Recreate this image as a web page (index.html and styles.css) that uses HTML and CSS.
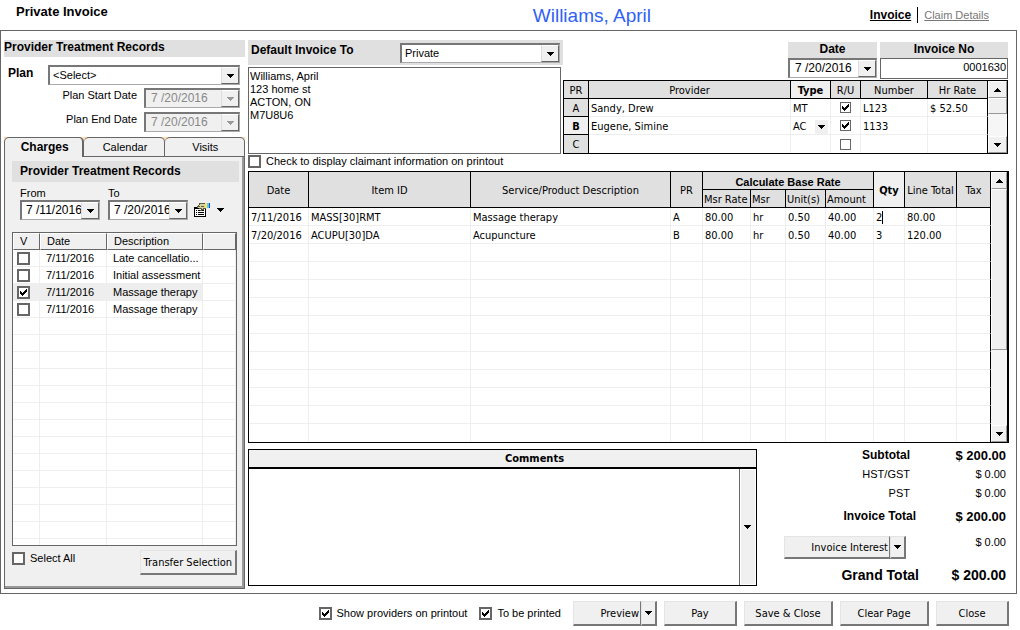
FILE: index.html
```html
<!DOCTYPE html>
<html lang="en">

<head>
  <meta charset="UTF-8">
  <meta name="viewport" content="width=device-width, initial-scale=1.0">
  <title>Private Invoice</title>
  <link rel="stylesheet" href="styles.css">
</head>

<body>
  <header class="page-header">
    <h1 class="page-title">Private Invoice</h1>
    <div class="client-name">Williams, April</div>
    <nav class="page-nav">
      <a href="#invoice" class="active">Invoice</a>
      <a href="#claim">Claim Details</a>
    </nav>
  </header>

  <main class="frame">
    <!-- left side: treatment records -->
    <aside class="sidebar">
      <h2 class="bar">Provider Treatment Records</h2>
      <div class="plan">
        <label class="plan-label" for="plan">Plan</label>
        <div class="combo"><select id="plan"><option>&lt;Select&gt;</option></select></div>
      </div>
      <div class="plan-date">
        <label for="planStart">Plan Start Date</label>
        <div class="combo date disabled"><select id="planStart" disabled><option>7 /20/2016</option></select></div>
      </div>
      <div class="plan-date">
        <label for="planEnd">Plan End Date</label>
        <div class="combo date disabled"><select id="planEnd" disabled><option>7 /20/2016</option></select></div>
      </div>

      <div class="tabs">
        <button class="tab active">Charges</button>
        <button class="tab">Calendar</button>
        <button class="tab">Visits</button>
      </div>

      <section class="tab-panel">
        <h3 class="bar inner-bar">Provider Treatment Records</h3>
        <div class="range">
          <div class="range-field">
            <label for="from">From</label>
            <div class="combo date"><select id="from"><option>7 /11/2016</option></select></div>
          </div>
          <div class="range-field">
            <label for="to">To</label>
            <div class="combo date"><select id="to"><option>7 /20/2016</option></select></div>
          </div>
          <button class="icon-btn" aria-label="Options">
            <svg width="16" height="15" viewBox="0 0 16 15" shape-rendering="crispEdges">
              <path d="M0 4h12v10H0z" fill="#000" />
              <path d="M1 6h10v7H1z" fill="#fff" />
              <path d="M2 7h1v1H2zM4 7h6v1H4zM2 9h1v1H2zM4 9h6v1H4zM2 11h1v1H2zM4 11h6v1H4z" fill="#000" />
              <path d="M5 0h6v1h1v5h-2v1H8v1H6V7h1V6H5V5H3V3h1V2h1z" fill="#5c5a44" />
              <path d="M6 1h5v4H9v1H8V5H4V4h2V3H5V2h1z" fill="#d8d4a0" />
              <path d="M7 3h3v1H7z" fill="#5c5a44" />
              <path d="M11 0h2v5h-2z" fill="#ffe45a" />
              <path d="M13 0h2v5h-2z" fill="#58c8ff" />
              <path d="M15 0h1v5h-1z" fill="#0a50d8" />
            </svg>
            <i class="caret"></i>
          </button>
        </div>

        <div class="list">
          <table>
            <colgroup><col class="l-check"><col class="l-date"><col class="l-desc"><col></colgroup>
            <thead>
              <tr><th>V</th><th>Date</th><th>Description</th><th></th></tr>
            </thead>
            <tbody id="charges">
              <tr><td><input type="checkbox" aria-label="Late cancellation"></td><td>7/11/2016</td><td>Late cancellatio...</td><td></td></tr>
              <tr><td><input type="checkbox" aria-label="Initial assessment"></td><td>7/11/2016</td><td>Initial assessment</td><td></td></tr>
              <tr class="selected"><td><input type="checkbox" aria-label="Massage therapy" checked></td><td>7/11/2016</td><td>Massage therapy</td><td></td></tr>
              <tr><td><input type="checkbox" aria-label="Massage therapy"></td><td>7/11/2016</td><td>Massage therapy</td><td></td></tr>
            </tbody>
          </table>
        </div>

        <div class="list-actions">
          <label class="check"><input type="checkbox"> Select All</label>
          <button class="btn">Transfer Selection</button>
        </div>
      </section>
    </aside>

    <!-- right side: the invoice -->
    <div class="invoice">
      <div class="top">
        <section class="invoice-to">
          <div class="bar to-bar">
            <label for="invoiceTo">Default Invoice To</label>
            <div class="combo"><select id="invoiceTo"><option>Private</option></select></div>
          </div>
          <textarea class="address" aria-label="Address">Williams, April
123 home st
ACTON, ON
M7U8U6</textarea>
          <label class="check"><input type="checkbox"> Check to display claimant information on printout</label>
        </section>

        <section class="providers">
          <div class="numbers">
            <div class="number-field date-field">
              <label class="bar" for="date">Date</label>
              <div class="combo date"><select id="date"><option>7 /20/2016</option></select></div>
            </div>
            <div class="number-field no-field">
              <label class="bar" for="invoiceNo">Invoice No</label>
              <input type="text" id="invoiceNo" value="0001630">
            </div>
          </div>
          <div class="grid">
            <table>
              <colgroup><col class="p-pr"><col><col class="p-type"><col class="p-ru"><col class="p-number"><col class="p-rate"></colgroup>
              <thead>
                <tr><th>PR</th><th>Provider</th><th class="current">Type</th><th>R/U</th><th>Number</th><th>Hr Rate</th></tr>
              </thead>
              <tbody>
                <tr><th>A</th><td>Sandy, Drew</td><td>MT</td><td class="center"><input type="checkbox" aria-label="R/U A" checked></td><td>L123</td><td>$ 52.50</td></tr>
                <tr><th class="current">B</th><td>Eugene, Simine</td><td><div class="type-cell">AC <button aria-label="Choose type"><i class="caret"></i></button></div></td><td class="center"><input type="checkbox" aria-label="R/U B" checked></td><td>1133</td><td></td></tr>
                <tr><th>C</th><td></td><td></td><td class="center"><input type="checkbox" aria-label="R/U C"></td><td></td><td></td></tr>
              </tbody>
            </table>
            <div class="scrollbar">
              <button class="up" aria-label="Scroll up"><i class="caret"></i></button>
              <div class="thumb"></div>
              <button class="down" aria-label="Scroll down"><i class="caret"></i></button>
            </div>
          </div>
        </section>
      </div>

      <div class="grid items">
        <table>
          <colgroup>
            <col class="i-date"><col class="i-id"><col><col class="i-pr"><col class="i-rate"><col class="i-msr">
            <col class="i-units"><col class="i-amount"><col class="i-qty"><col class="i-total"><col class="i-tax">
          </colgroup>
          <thead>
            <tr>
              <th rowspan="2">Date</th><th rowspan="2">Item ID</th><th rowspan="2">Service/Product Description</th><th rowspan="2">PR</th>
              <th colspan="4" class="group">Calculate Base Rate</th>
              <th rowspan="2" class="current">Qty</th><th rowspan="2">Line Total</th><th rowspan="2">Tax</th>
            </tr>
            <tr class="sub"><th>Msr Rate</th><th>Msr</th><th>Unit(s)</th><th>Amount</th></tr>
          </thead>
          <tbody id="items">
            <tr><td>7/11/2016</td><td>MASS[30]RMT</td><td>Massage therapy</td><td>A</td><td>80.00</td><td>hr</td><td>0.50</td><td>40.00</td><td><span class="editing">2</span></td><td>80.00</td><td></td></tr>
            <tr><td>7/20/2016</td><td>ACUPU[30]DA</td><td>Acupuncture</td><td>B</td><td>80.00</td><td>hr</td><td>0.50</td><td>40.00</td><td>3</td><td>120.00</td><td></td></tr>
          </tbody>
        </table>
        <div class="scrollbar">
          <button class="up" aria-label="Scroll up"><i class="caret"></i></button>
          <div class="thumb"></div>
          <button class="down" aria-label="Scroll down"><i class="caret"></i></button>
        </div>
      </div>

      <div class="bottom">
        <section class="comments">
          <label for="comments">Comments</label>
          <div class="comments-body">
            <textarea id="comments"></textarea>
            <button aria-label="Choose comment"><i class="caret"></i></button>
          </div>
        </section>

        <section class="totals">
          <div class="total strong"><span>Subtotal</span><span class="amount">$ 200.00</span></div>
          <div class="total"><span>HST/GST</span><span class="amount">$ 0.00</span></div>
          <div class="total"><span>PST</span><span class="amount">$ 0.00</span></div>
          <div class="total strong sum"><span>Invoice Total</span><span class="amount">$ 200.00</span></div>
          <div class="total interest">
            <div class="split">
              <button class="btn">Invoice Interest</button>
              <button class="btn drop" aria-label="Interest options"><i class="caret"></i></button>
            </div>
            <span class="amount">$ 0.00</span>
          </div>
          <div class="total strong grand"><span>Grand Total</span><span class="amount">$ 200.00</span></div>
        </section>
      </div>
    </div>
  </main>

  <footer class="actions">
    <label class="check"><input type="checkbox" checked> Show providers on printout</label>
    <label class="check"><input type="checkbox" checked> To be printed</label>
    <div class="split">
      <button class="btn">Preview</button>
      <button class="btn drop" aria-label="Preview options"><i class="caret"></i></button>
    </div>
    <button class="btn">Pay</button>
    <button class="btn wide">Save &amp; Close</button>
    <button class="btn wide">Clear Page</button>
    <button class="btn">Close</button>
  </footer>

  <script>
    // fill the tables up with empty rows
    function addEmptyRows(id, rows, cols) {
      const body = document.getElementById(id);
      for (let i = 0; i < rows; i++) {
        const tr = body.insertRow();
        for (let j = 0; j < cols; j++) tr.insertCell();
      }
    }
    addEmptyRows('charges', 16, 4);
    addEmptyRows('items', 11, 11);
  </script>
</body>

</html>
```
FILE: styles.css
```css
:root {
  --sans: "Liberation Sans", Arial, sans-serif;
  --ui: "DejaVu Sans Condensed", Tahoma, sans-serif;
  --gray: #e0e0e0;
  --face: #f0f0f0;
  --dark: #666;
  --caret: url("data:image/svg+xml,%3Csvg xmlns='http://www.w3.org/2000/svg' width='7' height='4' shape-rendering='crispEdges'%3E%3Cpath d='M0 0h7v1H0zM1 1h5v1H1zM2 2h3v1H2zM3 3h1v1H3z'/%3E%3C/svg%3E");
  --caret-off: url("data:image/svg+xml,%3Csvg xmlns='http://www.w3.org/2000/svg' width='7' height='4' shape-rendering='crispEdges'%3E%3Cpath fill='%23999' d='M0 0h7v1H0zM1 1h5v1H1zM2 2h3v1H2zM3 3h1v1H3z'/%3E%3C/svg%3E");
  --tick: url("data:image/svg+xml,%3Csvg xmlns='http://www.w3.org/2000/svg' width='7' height='7' shape-rendering='crispEdges'%3E%3Cpath d='M0 2h1v3H0zM1 3h1v3H1zM2 4h1v3H2zM3 3h1v3H3zM4 2h1v3H4zM5 1h1v3H5zM6 0h1v3H6z'/%3E%3C/svg%3E");
}

* {
  box-sizing: border-box;
}

body {
  margin: 0;
  background: #fff;
  color: #000;
  font: 11px/13px var(--sans);
}

h1,
h2,
h3 {
  margin: 0;
}

button,
input,
select,
textarea {
  margin: 0;
  padding: 0;
  border: 0;
  border-radius: 0;
  background: none;
  color: inherit;
  font: inherit;
}

/* header */
.page-header {
  display: flex;
  height: 30px;
  padding: 0 31px 0 16px;
}

.page-title {
  flex: 1;
  font-size: 13px;
  line-height: 24px;
}

.client-name {
  color: #2f62f5;
  font-size: 19px;
  line-height: 31px;
}

.page-nav {
  flex: 0 0 338px;
  display: flex;
  justify-content: flex-end;
  align-items: center;
}

.page-nav a {
  color: #777;
  line-height: 16px;
}

.page-nav .active {
  margin-right: 6px;
  padding-right: 6px;
  border-right: 1px solid #000;
  color: #000;
  font-size: 12px;
  font-weight: bold;
}

.frame {
  display: grid;
  grid-template-columns: 241px 1fr;
  gap: 3px;
  margin-right: 3px;
  padding: 9px 7px 4px 3px;
  border: 1px solid var(--dark);
}

.bar {
  background: var(--gray);
  font-size: 12px;
  font-weight: bold;
  line-height: 15px;
}

/* form controls */
.combo {
  display: grid;
  height: 20px;
  border: 1px solid;
  border-width: 2px 1px 1px 2px;
  border-color: #777 #aaa #aaa #777;
  background: #fff;
}

.combo select {
  grid-area: 1 / 1;
  min-width: 0;
  padding: 0 16px 0 3px;
  appearance: none;
}

.combo::after {
  content: "";
  grid-area: 1 / 1;
  justify-self: end;
  width: 16px;
  border: 1px solid;
  border-color: #fff var(--dark) var(--dark) #ddd;
  background: var(--face) var(--caret) center no-repeat;
  pointer-events: none;
}

.combo.date select {
  padding-left: 5px;
  font-size: 12px;
}

.combo.disabled {
  background: var(--face);
}

.combo.disabled select {
  color: #888;
  opacity: 1;
}

.combo.disabled::after {
  background-image: var(--caret-off);
}

.caret {
  display: block;
  width: 7px;
  height: 4px;
  background: var(--caret);
}

.up .caret {
  transform: rotate(180deg);
}

input[type="checkbox"] {
  display: block;
  flex: none;
  width: 13px;
  height: 13px;
  border: 2px solid var(--dark);
  background: #fff;
  appearance: none;
}

input[type="checkbox"]:checked {
  background: #fff var(--tick) center no-repeat;
}

.check {
  display: flex;
  align-items: center;
  gap: 5px;
}

.btn {
  min-width: 73px;
  height: 25px;
  border: 1px solid;
  border-width: 1px 2px 2px 1px;
  border-color: #e4e4e4 #777 #777 #e4e4e4;
  background: var(--face);
  font-family: var(--ui);
  text-align: center;
}

.btn.wide {
  min-width: 89px;
}

.split {
  display: flex;
}

.split .btn {
  min-width: 0;
  padding-right: 1px;
  border-right-width: 1px;
  text-align: right;
}

.split .drop {
  display: flex;
  align-items: center;
  justify-content: center;
  width: 16px;
  padding: 0;
  border-right-width: 2px;
}

/* sidebar */
.sidebar {
  display: flex;
  flex-direction: column;
}

.sidebar > .bar {
  height: 17px;
}

.plan {
  display: flex;
  margin: 8px 5px 3px 4px;
}

.plan-label {
  width: 40px;
  font-size: 12px;
  font-weight: bold;
  line-height: 17px;
}

.plan .combo {
  flex: 1;
}

.plan-date {
  display: flex;
  justify-content: flex-end;
  gap: 7px;
  margin: 0 5px 4px 0;
  line-height: 15px;
}

.plan-date .combo {
  width: 96px;
}

.tabs {
  display: grid;
  grid-template-columns: repeat(3, 1fr);
  margin-top: 1px;
  background: #ffdcb4;
}

.tab {
  height: 20px;
  padding-left: 2px;
  border: 1px solid var(--dark);
  border-left-width: 0;
  border-radius: 5px 5px 0 0;
  background: var(--face);
}

.tab.active {
  border-width: 1px 2px 0 1px;
  font-size: 12px;
  font-weight: bold;
}

.tab-panel {
  flex: 1;
  display: flex;
  flex-direction: column;
  padding: 4px 5px 13px 7px;
  border: 1px solid var(--dark);
  border-width: 0 1px 1px;
  background: var(--face);
  box-shadow: inset -2px -2px #999;
}

.inner-bar {
  padding: 3px 8px;
  height: 21px;
}

.range {
  display: flex;
  align-items: flex-end;
  gap: 8px;
  padding: 5px 8px 12px;
}

.range-field .combo {
  width: 80px;
}

.range-field .combo select {
  padding-left: 4px;
  padding-right: 12px;
}

.icon-btn {
  display: flex;
  align-items: center;
  gap: 7px;
  height: 20px;
  margin-left: -2px;
}

.list {
  flex: 1 1 0;
  min-height: 0;
  margin-right: 2px;
  overflow: hidden;
  border: 1px solid var(--dark);
  background: #fff;
}

.list table {
  width: 100%;
  border-collapse: separate;
  border-spacing: 0;
  table-layout: fixed;
}

.l-check {
  width: 27px;
}

.l-date {
  width: 67px;
}

.l-desc {
  width: 96px;
}

.list th {
  height: 17px;
  padding: 0 6px;
  border: 1px solid;
  border-color: #fff var(--dark) var(--dark) #fff;
  background: var(--face);
  font-weight: normal;
  text-align: left;
}

.list td {
  height: 17px;
  padding: 0 0 0 6px;
  border: solid #eee;
  border-width: 0 1px 1px 0;
  white-space: nowrap;
}

.list td:first-child {
  padding-left: 4px;
}

.list .selected td:not(:last-child) {
  background: #eee;
}

.list-actions {
  display: flex;
  justify-content: space-between;
  align-items: flex-start;
  margin: 4px 2px 0 0;
}

.list-actions .check {
  height: 17px;
}

.list-actions .btn {
  padding: 0 3px;
}

/* invoice-to and providers */
.invoice {
  min-width: 0;
}

.top {
  display: flex;
  height: 131px;
}

.invoice-to {
  flex: 0 0 315px;
  display: flex;
  flex-direction: column;
}

.to-bar {
  display: flex;
  justify-content: space-between;
  height: 25px;
  padding: 3px 3px 2px;
}

.to-bar .combo {
  width: 160px;
  font-size: 11px;
  font-weight: normal;
}

.address {
  height: 87px;
  margin: 2px 2px 1px 0;
  padding: 2px 1px;
  border: 1px solid var(--dark);
  resize: none;
}

.providers {
  flex: 1;
  display: flex;
  flex-direction: column;
  min-width: 0;
}

.numbers {
  display: flex;
  justify-content: flex-end;
  gap: 3px;
  margin-top: 2px;
  padding-right: 1px;
}

.date-field {
  width: 89px;
}

.no-field {
  width: 128px;
}

.number-field .bar {
  display: block;
  height: 16px;
  text-align: center;
}

.number-field input {
  display: block;
  width: 100%;
  height: 21px;
  padding: 0 1px 3px;
  border: 1px solid var(--dark);
  text-align: right;
}

/* grids */
.grid {
  display: flex;
  border: 1px solid #000;
  font-family: var(--ui);
}

.providers .grid {
  margin: 1px 1px 0 0;
}

.grid table {
  flex: 1;
  width: 0;
  border-collapse: separate;
  border-spacing: 0;
  table-layout: fixed;
}

.grid th,
.grid td {
  height: 18px;
  padding: 2px 2px 0;
  border: solid #eee;
  border-width: 0 1px 1px 0;
  line-height: 14px;
  white-space: nowrap;
}

.grid th {
  padding: 2px 0 0;
  border-color: #000;
  background: var(--gray);
  font-weight: normal;
}

.grid th.current {
  background: var(--face);
  font-weight: bold;
}

.grid .group {
  font-family: var(--sans);
  font-weight: bold;
}

.grid .sub th {
  padding-left: 1px;
  text-align: left;
}

.grid td:last-child {
  border-right-color: #000;
}

.grid tbody tr:last-child > * {
  border-bottom-width: 0;
}

.grid .center {
  padding: 0 9px;
}

.grid input[type="checkbox"] {
  width: 11px;
  height: 11px;
  border-width: 1px;
}

.type-cell {
  display: flex;
  justify-content: space-between;
}

.type-cell button {
  padding: 4px 3px;
  background: var(--face);
}

.p-pr { width: 25px; }
.p-type { width: 40px; }
.p-ru { width: 30px; }
.p-number { width: 67px; }
.p-rate { width: 60px; }

.i-date { width: 60px; }
.i-id { width: 162px; }
.i-pr { width: 32px; }
.i-rate { width: 48px; }
.i-msr { width: 35px; }
.i-units { width: 40px; }
.i-amount { width: 48px; }
.i-qty { width: 31px; }
.i-total { width: 52px; }
.i-tax { width: 34px; }

.editing {
  border-right: 1px solid #000;
}

.scrollbar {
  display: flex;
  flex-direction: column;
  width: 19px;
  background: #f6f6f6;
}

.scrollbar button {
  display: flex;
  align-items: center;
  justify-content: center;
  height: 17px;
  border: 1px solid;
  border-color: #fff #999 #999 #fff;
  background: var(--face);
}

.thumb {
  height: 16px;
  border: 1px solid;
  border-color: #fff #999 #999 #fff;
  background: var(--face);
}

.scrollbar .down {
  margin-top: auto;
}

.items {
  border-right-width: 2px;
}

.items .scrollbar {
  width: 16px;
}

.items .thumb {
  height: 161px;
}

/* comments and totals */
.bottom {
  display: flex;
  align-items: flex-start;
  gap: 20px;
  margin-top: 6px;
  padding-bottom: 1px;
}

.comments {
  flex: 0 1 509px;
  border: 1px solid #000;
}

.comments label {
  display: block;
  height: 19px;
  padding-left: 64px;
  border-bottom: 2px solid #000;
  background: var(--face);
  font-family: var(--ui);
  font-weight: bold;
  line-height: 18px;
  text-align: center;
}

.comments-body {
  display: flex;
  height: 116px;
}

.comments-body textarea {
  flex: 1;
  padding: 2px;
  border-right: 1px solid var(--dark);
  resize: none;
}

.comments-body button {
  width: 16px;
  padding-left: 3px;
  border: 1px solid #fff;
  background: var(--face);
}

.totals {
  flex: 1;
  padding-right: 3px;
}

.total {
  display: flex;
  justify-content: flex-end;
  height: 19px;
}

.amount {
  width: 96px;
  text-align: right;
}

.strong {
  font-size: 12px;
  font-weight: bold;
}

.strong .amount {
  font-size: 13px;
}

.total.sum,
.total.grand {
  margin-top: 4px;
}

.sum .amount {
  width: 90px;
}

.interest {
  height: 29px;
  margin-top: 7px;
}

.interest .amount {
  width: 100px;
}

.interest .split .btn:first-child {
  width: 106px;
}

.interest .split .btn {
  height: 23px;
}

.total.grand,
.grand .amount {
  font-size: 14px;
}

.grand .amount {
  width: 87px;
}

/* footer buttons */
.actions {
  display: flex;
  justify-content: flex-end;
  gap: 7px;
  padding: 7px 11px 4px 0;
}

.actions .check {
  margin-right: 5px;
}

.actions .split .btn:first-child {
  width: 68px;
}
```
